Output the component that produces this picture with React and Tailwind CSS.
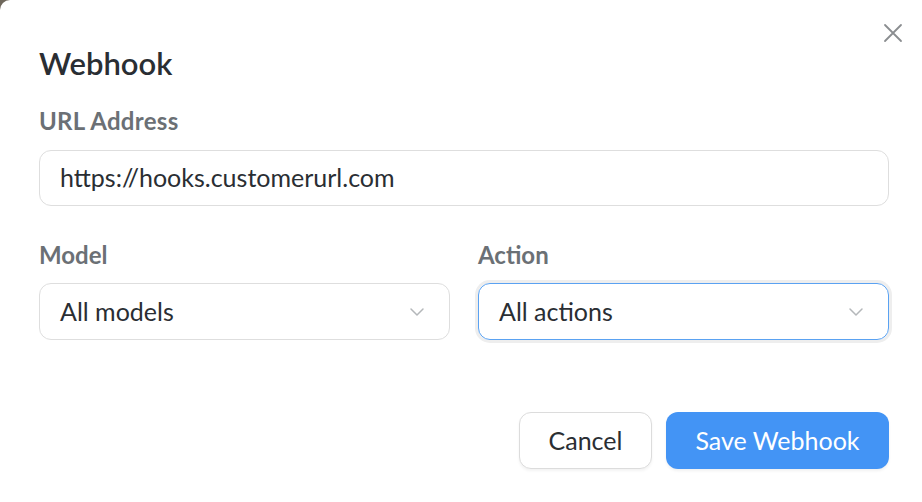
import React from "react";

const Chevron = () => (
  <svg width="16" height="10" viewBox="0 0 16 10" fill="none" className="shrink-0">
    <path d="M2 2l6 6 6-6" stroke="#b4b7ba" strokeWidth="1.5" strokeLinecap="round" strokeLinejoin="round" />
  </svg>
);

export default function App() {
  return (
    <div className="w-[922px] h-[502px] bg-[#6f685c] overflow-hidden" style={{ fontFamily: "Lato, 'Open Sans', sans-serif" }}>
      <div className="relative w-full h-full bg-white rounded-tl-[10px] pl-[39px] pr-[33px] pt-[45px]">
        <button className="absolute right-[18px] top-[22px] text-[#8a8d90]">
          <svg width="22" height="22" viewBox="0 0 22 22" fill="none">
            <path d="M3 3l16 16M19 3L3 19" stroke="currentColor" strokeWidth="1.8" strokeLinecap="round" />
          </svg>
        </button>
        <h1 className="text-[31px] leading-[36px] font-semibold text-[#2a2e33]">Webhook</h1>
        <div className="mt-[25px] text-[24px] leading-[30px] font-bold tracking-[0.3px] text-[#6b7075]">URL Address</div>
        <div className="mt-[14px] h-[56px] rounded-[12px] border border-[#dedede] flex items-center px-[20px] text-[25px] text-[#2a2e33]">
          https://hooks.customerurl.com
        </div>
        <div className="mt-[34px] grid grid-cols-2 gap-[28px]">
          <div>
            <div className="text-[24px] leading-[30px] font-bold text-[#6b7075]">Model</div>
            <div className="mt-[13px] h-[57px] rounded-[12px] border border-[#dedede] flex items-center justify-between pl-[20px] pr-[24px] text-[25px] text-[#2a2e33]">
              <span>All models</span>
              <Chevron />
            </div>
          </div>
          <div>
            <div className="text-[24px] leading-[30px] font-bold text-[#6b7075]">Action</div>
            <div className="mt-[13px] h-[57px] rounded-[12px] border border-[#5aa2f2] shadow-[0_0_0_3px_#eeeeee] flex items-center justify-between pl-[20px] pr-[24px] text-[25px] text-[#2a2e33]">
              <span>All actions</span>
              <Chevron />
            </div>
          </div>
        </div>
        <div className="mt-[72px] flex justify-end gap-[14px]">
          <button className="w-[133px] h-[57px] rounded-[12px] border border-[#dcdcdc] bg-white text-[25px] text-[#2a2e33] shadow-[0_2px_3px_rgba(0,0,0,0.05)]">
            Cancel
          </button>
          <button className="w-[223px] h-[57px] rounded-[12px] bg-[#4394f5] text-[25px] text-white shadow-[0_2px_3px_rgba(0,0,0,0.06)]">
            Save Webhook
          </button>
        </div>
      </div>
    </div>
  );
}
